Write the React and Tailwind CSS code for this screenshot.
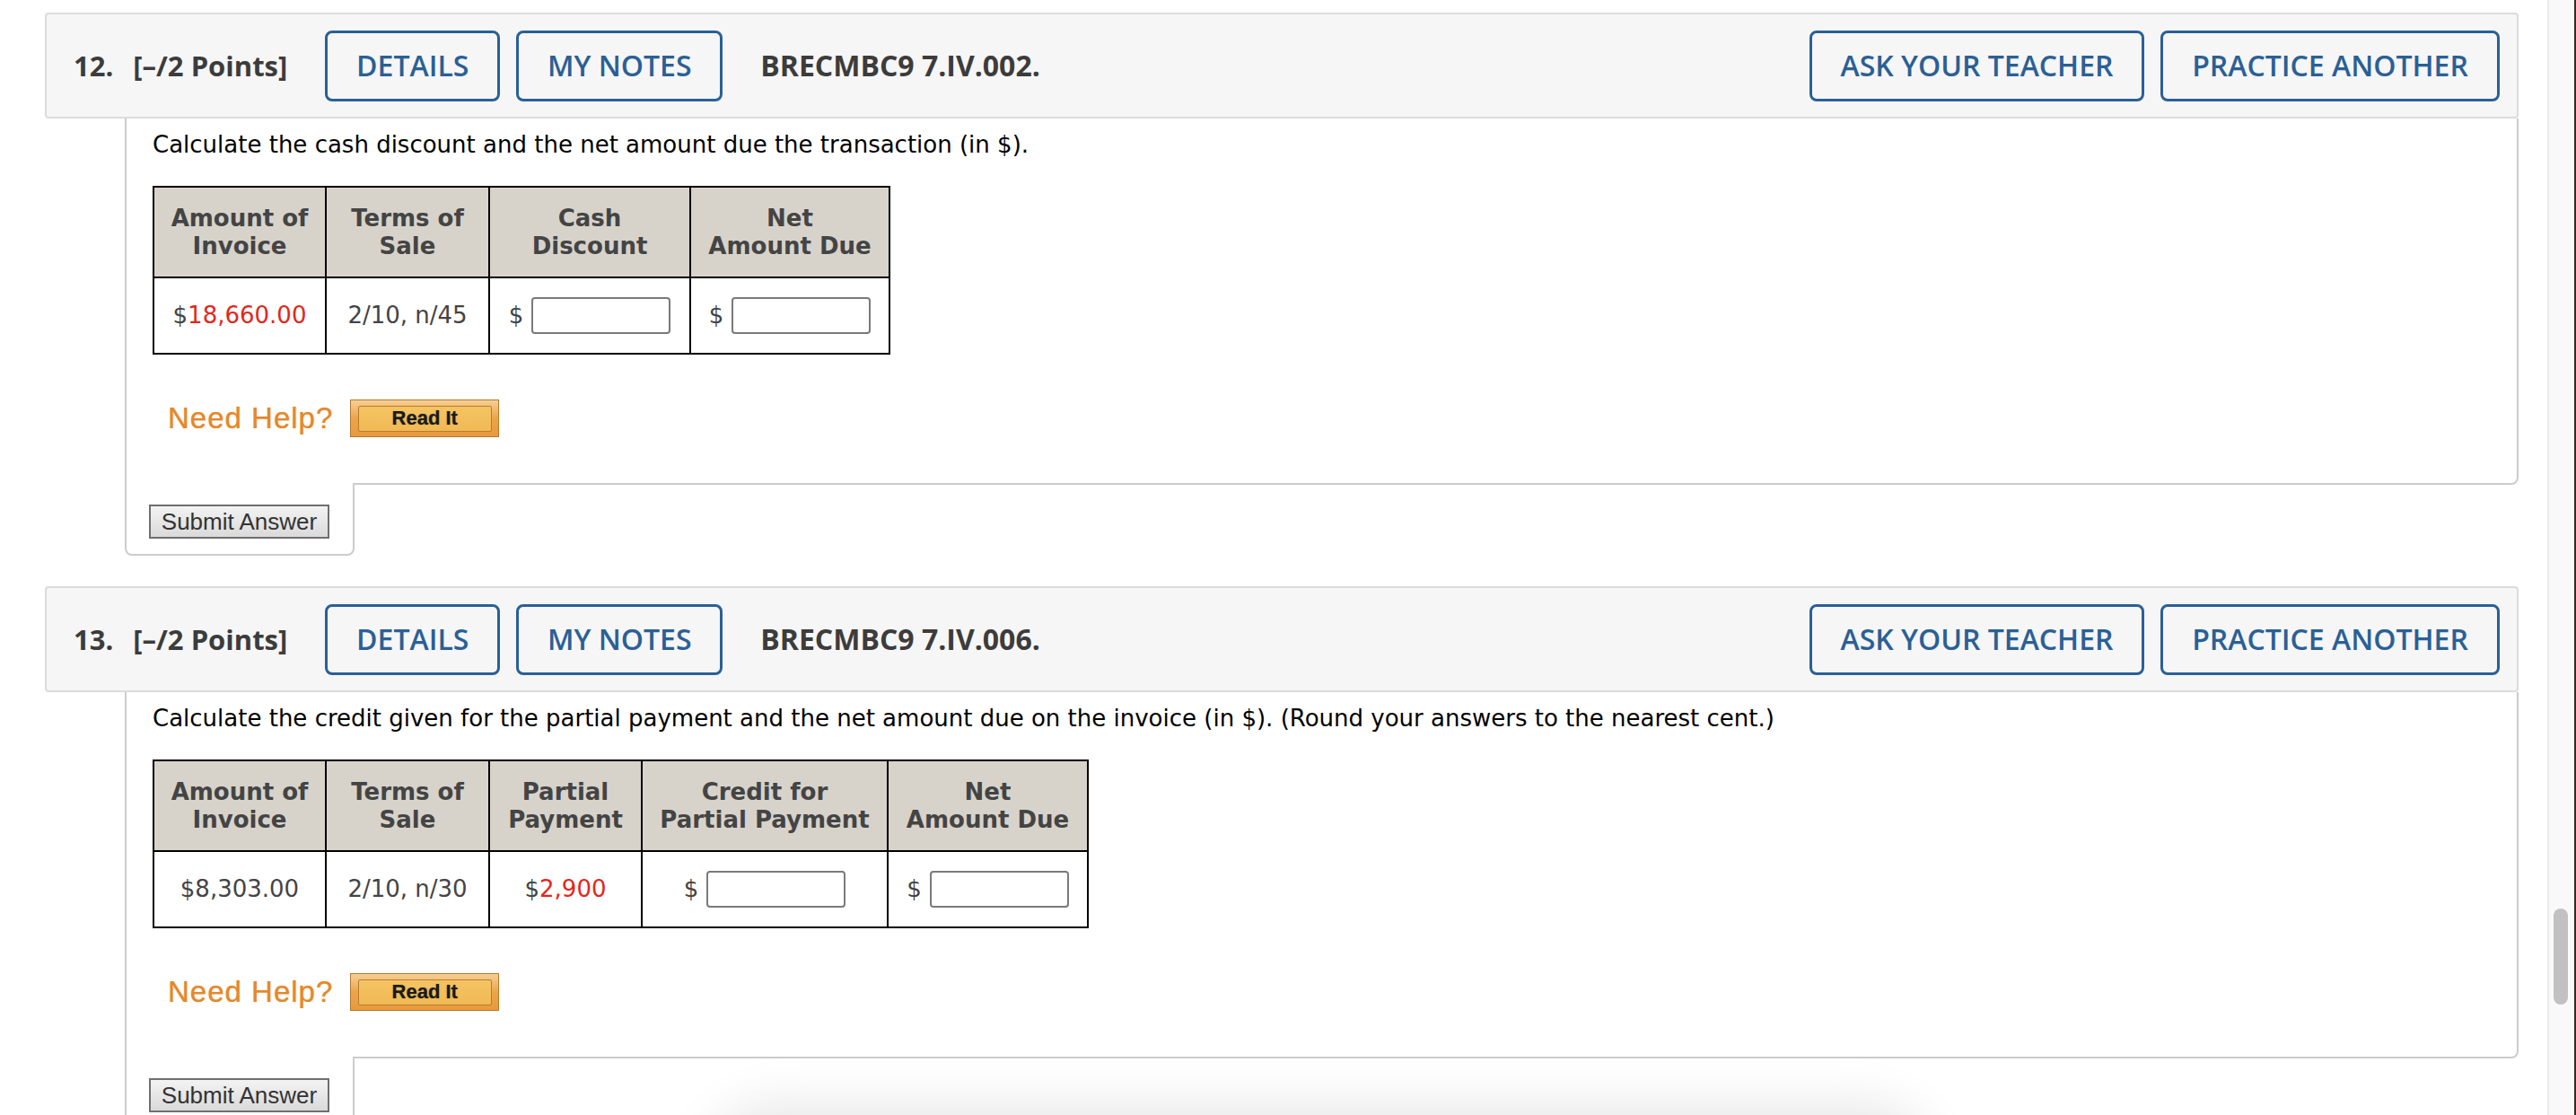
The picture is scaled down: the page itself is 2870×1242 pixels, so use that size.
import React from "react";

function HBtn({ children, className }) {
  return (
    <div
      className={
        "h-[79px] border-[3px] border-[#2a6096] rounded-[8px] text-[#2a6096] text-[32px] font-semibold flex items-center justify-center " +
        className
      }
    >
      {children}
    </div>
  );
}

function QHeader({ num, code }) {
  return (
    <div className="h-[118px] bg-[#f6f6f6] border-2 border-[#dcdcdc] rounded-[4px] flex items-center pl-[30px] pr-[19px] font-['Open_Sans',sans-serif] text-[#3c3c3c]">
      <span className="text-[31px] font-bold">{num}.</span>
      <span className="ml-[22px] text-[31px] font-bold">[–/2 Points]</span>
      <HBtn className="ml-[42px] w-[195px]">DETAILS</HBtn>
      <HBtn className="ml-[18px] w-[230px]">MY NOTES</HBtn>
      <span className="ml-[42px] text-[32px] font-bold">{code}</span>
      <div className="flex-1" />
      <HBtn className="w-[373px]">ASK YOUR TEACHER</HBtn>
      <HBtn className="ml-[18px] w-[378px]">PRACTICE ANOTHER</HBtn>
    </div>
  );
}

function Money({ prefix = "$", value }) {
  return (
    <span>
      {prefix}
      <span className="text-[#e3261b]">{value}</span>
    </span>
  );
}

function AnswerBox() {
  return (
    <span className="flex items-center">
      <span>$</span>
      <span className="ml-[9px] w-[155px] h-[41px] border-2 border-[#7a7a7a] rounded-[4px] bg-white inline-block" />
    </span>
  );
}

function Grid({ cols, headers, cells }) {
  return (
    <div
      className={
        "inline-grid gap-[2px] p-[2px] bg-black font-['DejaVu_Sans',sans-serif] text-[#444] grid-rows-[99px_83px] " +
        cols
      }
    >
      {headers.map((h, i) => (
        <div
          key={"h" + i}
          className="bg-[#d7d3cb] flex items-center justify-center text-center font-bold text-[26px] leading-[31px] px-[4px]"
        >
          <div>
            {h[0]}
            <br />
            {h[1]}
          </div>
        </div>
      ))}
      {cells.map((c, i) => (
        <div
          key={"c" + i}
          className="bg-white flex items-center justify-center text-[26px] leading-[31px]"
        >
          {c}
        </div>
      ))}
    </div>
  );
}

function Help() {
  return (
    <div className="flex items-center ml-[17px] mt-[50px]">
      <span className="font-['Liberation_Sans',Arial,sans-serif] text-[33px] leading-[40px] tracking-[1px] text-[#e5882b] [text-shadow:0_0_1px_rgba(229,136,43,0.8)]">
        Need Help?
      </span>
      <div className="ml-[19px] w-[166px] h-[42px] border border-[#b5782f] bg-gradient-to-b from-[#f6cf93] via-[#eca449] to-[#e89a3c] flex items-center justify-center">
        <div className="w-[149px] h-[29px] border border-[#b97c30] rounded-[2px] bg-gradient-to-b from-[#f5c463] to-[#f0b954] flex items-center justify-center font-['Liberation_Sans',Arial,sans-serif] font-bold text-[22px] leading-none text-[#1a1a1a] [text-shadow:0_0_1px_rgba(0,0,0,0.5)]">
          Read It
        </div>
      </div>
    </div>
  );
}

function Question({ num, code, prompt, table, first }) {
  return (
    <div className={first ? "" : "mt-[34px]"}>
      <QHeader num={num} code={code} />
      <div className="ml-[89px] border-l-2 border-r-2 border-b-2 border-[#cccccc] rounded-br-[8px] pl-[29px] pt-[14px] pb-[51px]">
        <div className="font-['DejaVu_Sans',sans-serif] text-[26px] leading-[30px] text-black">
          {prompt}
        </div>
        <div className="mt-[31px]">{table}</div>
        <Help />
      </div>
      <div className="ml-[89px] -mt-[2px] w-[256px] h-[81px] border-l-2 border-r-2 border-b-2 border-[#cccccc] rounded-b-[8px] bg-white pl-[25px] pt-[24px]">
        <div className="w-[201px] h-[38px] border-2 border-[#6f6f6f] bg-gradient-to-b from-[#f3f3f3] to-[#dadada] flex items-center justify-center font-['Liberation_Sans',Arial,sans-serif] text-[26px] leading-none text-[#333]">
          Submit Answer
        </div>
      </div>
    </div>
  );
}

export default function App() {
  const table12 = (
    <Grid
      cols="grid-cols-[190px_180px_222px_220px]"
      headers={[
        ["Amount of", "Invoice"],
        ["Terms of", "Sale"],
        ["Cash", "Discount"],
        ["Net", "Amount Due"],
      ]}
      cells={[
        <Money value="18,660.00" />,
        "2/10, n/45",
        <AnswerBox />,
        <AnswerBox />,
      ]}
    />
  );
  const table13 = (
    <Grid
      cols="grid-cols-[190px_180px_168px_272px_221px]"
      headers={[
        ["Amount of", "Invoice"],
        ["Terms of", "Sale"],
        ["Partial", "Payment"],
        ["Credit for", "Partial Payment"],
        ["Net", "Amount Due"],
      ]}
      cells={[
        "$8,303.00",
        "2/10, n/30",
        <Money value="2,900" />,
        <AnswerBox />,
        <AnswerBox />,
      ]}
    />
  );
  return (
    <div className="relative w-[2870px] h-[1242px] overflow-hidden bg-white flex">
      <div className="flex-1 pt-[14px] pl-[50px] pr-[32px]">
        <Question
          first
          num="12"
          code="BRECMBC9 7.IV.002."
          prompt="Calculate the cash discount and the net amount due the transaction (in $)."
          table={table12}
        />
        <Question
          num="13"
          code="BRECMBC9 7.IV.006."
          prompt="Calculate the credit given for the partial payment and the net amount due on the invoice (in $). (Round your answers to the nearest cent.)"
          table={table13}
        />
      </div>
      <div className="w-[32px] h-full bg-[#f9f9f9] border-l-2 border-[#ebebeb] border-r-2 border-r-[#3b2a1c] flex flex-col items-center">
        <div className="mt-[1012px] ml-[-2px] w-[16px] h-[107px] rounded-full bg-[#c1c1c1]" />
      </div>
      <div className="absolute left-[820px] top-[1262px] w-[1300px] h-[200px] rounded-[40px] bg-white shadow-[0_0_60px_30px_rgba(0,0,0,0.10)]" />
    </div>
  );
}
